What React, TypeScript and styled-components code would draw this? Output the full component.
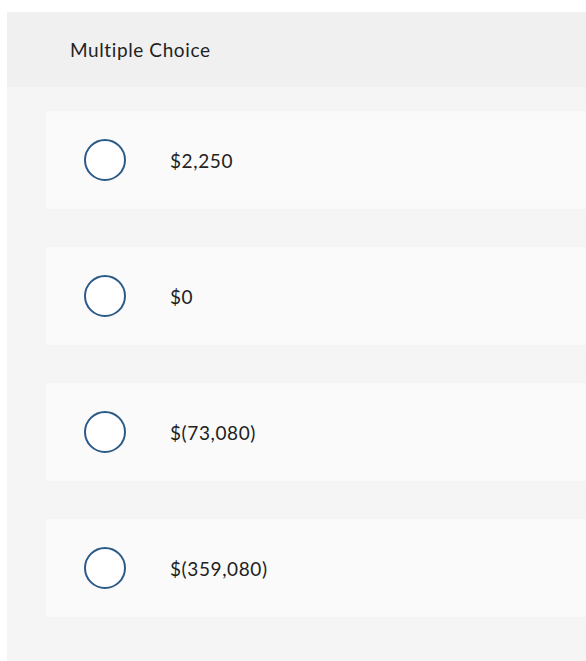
import React from 'react';
import styled, { createGlobalStyle } from 'styled-components';

const Global = createGlobalStyle`
  html, body { margin: 0; padding: 0; background: #ffffff; }
  body { font-family: Lato, "Open Sans", Arial, sans-serif; color: #222222; }
`;

const Page = styled.div`
  padding: 12px 0 0 7px;
`;

const Panel = styled.section`
  background: #f5f5f5;
  min-height: 649px;
`;

const Header = styled.header`
  height: 75px;
  background: #f0f0f0;
  display: flex;
  align-items: center;
  padding-left: 63px;
  font-size: 19px;
  letter-spacing: 0.6px;
  color: #222222;
`;

const Choices = styled.div`
  display: flex;
  flex-direction: column;
  gap: 38px;
  padding: 24px 0 40px 39px;
`;

const Choice = styled.label`
  height: 98px;
  background: #fafafa;
  display: flex;
  align-items: center;
  padding-left: 38px;
  gap: 44px;
  cursor: pointer;
`;

const Radio = styled.span`
  width: 38px;
  height: 38px;
  border-radius: 50%;
  border: 2px solid #2b5a87;
  background: #ffffff;
  flex: none;
`;

const Answer = styled.span`
  font-size: 19px;
  letter-spacing: 0.6px;
  color: #222222;
`;

const answers = ['$2,250', '$0', '$(73,080)', '$(359,080)'];

export default function App() {
  return (
    <>
      <Global />
      <Page>
        <Panel>
          <Header>Multiple Choice</Header>
          <Choices>
            {answers.map(a => (
              <Choice key={a}>
                <Radio />
                <Answer>{a}</Answer>
              </Choice>
            ))}
          </Choices>
        </Panel>
      </Page>
    </>
  );
}
